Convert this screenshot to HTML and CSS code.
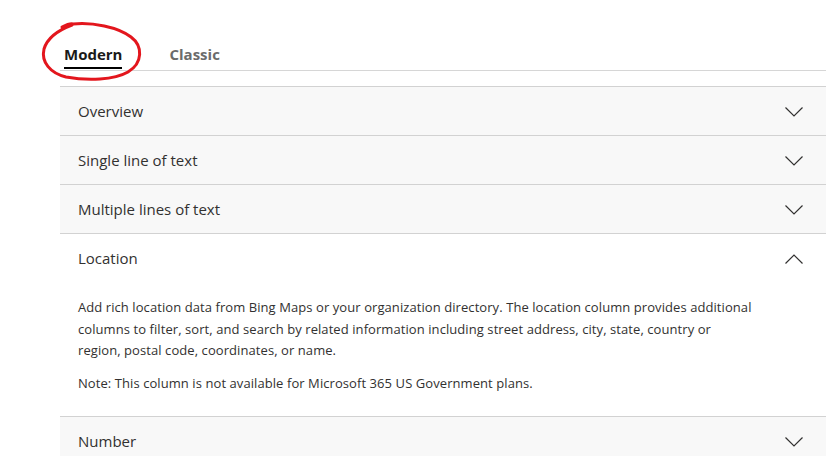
FILE: index.html
```html
<!DOCTYPE html>
<html lang="en">
<head>
<meta charset="utf-8">
<title>Column types</title>
<link rel="stylesheet" href="styles.css">
</head>
<body>
<div class="page">
  <div class="tabs">
    <div class="tab active">Modern</div>
    <div class="tab">Classic</div>
  </div>
  <div class="accordion">
    <div class="item">
      <div class="head"><span>Overview</span><svg class="chev" viewBox="0 0 18 10"><path d="M0.5 0.5 L9 9 L17.5 0.5"/></svg></div>
    </div>
    <div class="item">
      <div class="head"><span>Single line of text</span><svg class="chev" viewBox="0 0 18 10"><path d="M0.5 0.5 L9 9 L17.5 0.5"/></svg></div>
    </div>
    <div class="item">
      <div class="head"><span>Multiple lines of text</span><svg class="chev" viewBox="0 0 18 10"><path d="M0.5 0.5 L9 9 L17.5 0.5"/></svg></div>
    </div>
    <div class="item open">
      <div class="head"><span>Location</span><svg class="chev" viewBox="0 0 18 10"><path d="M0.5 9.5 L9 1 L17.5 9.5"/></svg></div>
      <div class="body">
        <p>Add rich location data from Bing Maps or your organization directory. The location column provides additional columns to filter, sort, and search by related information including street address, city, state, country or region, postal code, coordinates, or name.</p>
        <p>Note: This column is not available for Microsoft 365 US Government plans.</p>
      </div>
    </div>
    <div class="item">
      <div class="head"><span>Number</span><svg class="chev" viewBox="0 0 18 10"><path d="M0.5 0.5 L9 9 L17.5 0.5"/></svg></div>
    </div>
  </div>
  <svg class="ink" viewBox="0 0 160 100" width="160" height="100">
    <path d="M62 27 C66 25 70 23 73 24 C92 22 118 27 131 37 C143 46 143 63 128 72 C114 80 88 81 66 77 C50 73 41 62 44 49 C47 39 56 31 72 25"/>
  </svg>
</div>
</body>
</html>
```

FILE: styles.css
```css
html, body {
  margin: 0;
  padding: 0;
  background: #ffffff;
}
body {
  font-family: "Open Sans", "Noto Sans", sans-serif;
  color: #323130;
  overflow: hidden;
}
.page {
  position: relative;
  padding: 38px 0 0 60px;
}
.tabs {
  display: flex;
  border-bottom: 1px solid #d6d6d6;
  height: 33px;
  box-sizing: border-box;
  padding-left: 4px;
}
.tab {
  font-size: 15px;
  font-weight: 700;
  color: #6b6b6b;
  margin-right: 47px;
  height: 31px;
  line-height: 32px;
  box-sizing: border-box;
}
.tab.active {
  color: #1b1a19;
  border-bottom: 2px solid #000;
}
.accordion {
  margin-top: 15px;
  border-top: 1px solid #d2d2d2;
}
.item {
  border-bottom: 1px solid #d2d2d2;
}
.head {
  display: flex;
  align-items: center;
  justify-content: space-between;
  height: 48px;
  padding: 0 23px 0 18px;
  background: #f8f8f8;
  font-size: 15px;
}
.item.open .head {
  background: #ffffff;
}
.chev {
  width: 18px;
  height: 10px;
  margin-top: 2px;
  fill: none;
  stroke: #323130;
  stroke-width: 1.2;
}
.body {
  padding: 15px 18px 22px 18px;
  font-size: 13px;
  line-height: 21.5px;
  letter-spacing: 0.075px;
}
.body p {
  margin: 0;
  max-width: 675px;
}
.body p + p {
  margin-top: 11px;
}
.ink {
  position: absolute;
  left: 0;
  top: 0;
  fill: none;
  stroke: #e3161d;
  stroke-width: 3;
  stroke-linecap: round;
  stroke-linejoin: round;
}
```
